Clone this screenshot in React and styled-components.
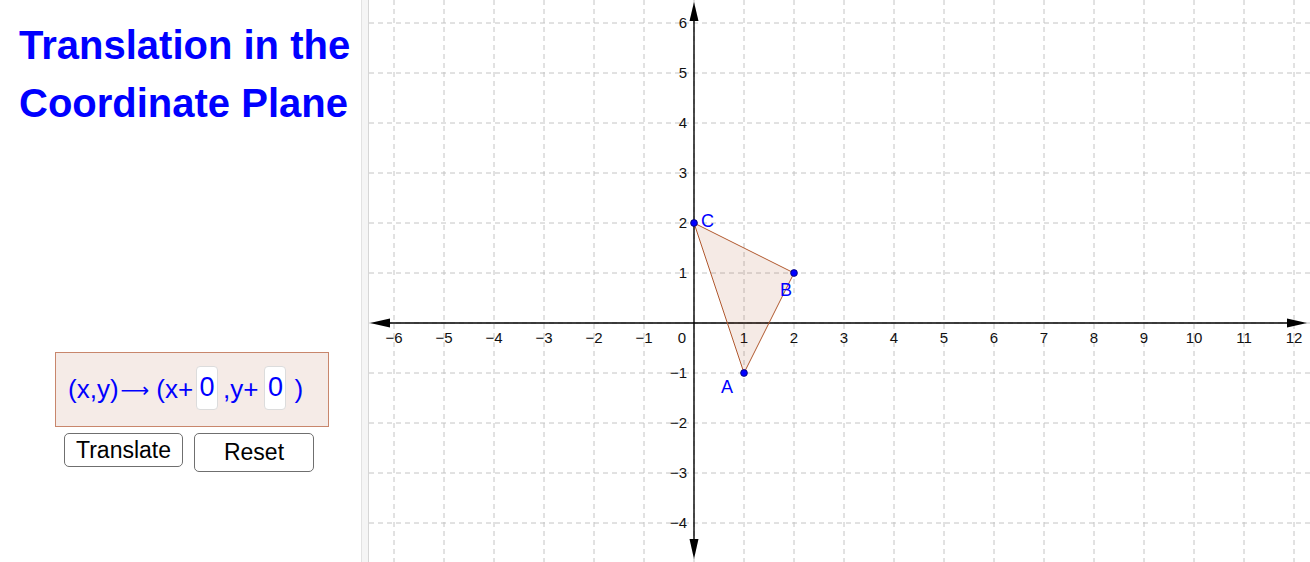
import React from "react";
import styled, { createGlobalStyle } from "styled-components";

const GlobalStyle = createGlobalStyle`
  html, body {
    margin: 0;
    padding: 0;
    background: #ffffff;
    font-family: "Liberation Sans", Arial, sans-serif;
  }
`;

const Page = styled.div`
  display: flex;
  width: 1310px;
  height: 562px;
  overflow: hidden;
  background: #ffffff;
`;

const Sidebar = styled.div`
  width: 361px;
  flex-shrink: 0;
  display: flex;
  flex-direction: column;
  padding-top: 16px;
  box-sizing: border-box;
`;

const Title = styled.h1`
  margin: 0 0 0 19px;
  font-size: 40px;
  line-height: 58px;
  font-weight: bold;
  color: #0000ff;
  white-space: nowrap;
`;

const FormulaBox = styled.div`
  margin: 220px 0 0 55px;
  width: 274px;
  height: 75px;
  box-sizing: border-box;
  display: flex;
  align-items: center;
  padding-left: 12px;
  background: #f5ebe7;
  border: 1px solid #c8866c;
  color: #0000ff;
  font-size: 26px;
  white-space: nowrap;
`;

const Arrow = styled.span`
  font-family: "DejaVu Sans", sans-serif;
  font-size: 20px;
  margin: 0 7px 0 2px;
`;

const Field = styled.input`
  width: 22px;
  height: 44px;
  box-sizing: border-box;
  margin: -4px ${(p) => p.$after}px 0 ${(p) => p.$before}px;
  padding: 0;
  border: 1px solid #dcdcdc;
  border-radius: 4px;
  background: #ffffff;
  color: #0000ff;
  font-family: inherit;
  font-size: 27px;
  text-align: center;
  outline: none;
`;

const ButtonRow = styled.div`
  display: flex;
  align-items: flex-start;
  gap: 11px;
  margin: 6px 0 0 64px;
`;

const Button = styled.button`
  width: ${(p) => p.$w}px;
  height: ${(p) => p.$h}px;
  padding: 0;
  box-sizing: border-box;
  background: #ffffff;
  border: 1px solid #6f6f6f;
  border-radius: 5px;
  font-family: "Liberation Sans", Arial, sans-serif;
  font-size: 23px;
  color: #000000;
`;

const Divider = styled.div`
  width: 8px;
  flex-shrink: 0;
  box-sizing: border-box;
  background: #f5f5f5;
  border-left: 1px solid #e2e2e2;
  border-right: 1px solid #d6d6d6;
`;

const GraphArea = styled.div`
  flex: 1;
  svg {
    display: block;
  }
`;

const OX = 694;
const OY = 323;
const U = 50;
const px = (x) => OX + x * U;
const py = (y) => OY - y * U;

const xs = Array.from({ length: 19 }, (_, i) => i - 6);
const ys = Array.from({ length: 11 }, (_, i) => i - 4);
const minus = (n) => (n < 0 ? `\u2212${-n}` : `${n}`);

const A = [1, -1];
const B = [2, 1];
const C = [0, 2];

function Graph() {
  const tri = [A, B, C].map(([x, y]) => `${px(x)},${py(y)}`).join(" ");
  return (
    <svg width="941" height="562" viewBox="369 0 941 562">
      <g stroke="#c4c4c4" strokeWidth="1" strokeDasharray="5 4">
        {xs.map((x) => (
          <line key={"v" + x} x1={px(x)} y1="0" x2={px(x)} y2="562" />
        ))}
        {ys.map((y) => (
          <line key={"h" + y} x1="369" y1={py(y)} x2="1310" y2={py(y)} />
        ))}
      </g>

      <g stroke="#000" strokeWidth="1.4">
        <line x1="385" y1={OY} x2="1292" y2={OY} />
        <line x1={OX} y1="16" x2={OX} y2="544" />
      </g>
      <g fill="#000">
        <polygon points={`370,${OY} 390,${OY - 4.5} 390,${OY + 4.5}`} />
        <polygon points={`1307,${OY} 1287,${OY - 4.5} 1287,${OY + 4.5}`} />
        <polygon points={`${OX},2 ${OX - 4.5},21 ${OX + 4.5},21`} />
        <polygon points={`${OX},559 ${OX - 4.5},539 ${OX + 4.5},539`} />
      </g>

      <g fontFamily="Liberation Sans, Arial, sans-serif" fontSize="15" fill="#111">
        {xs
          .filter((x) => x !== 0)
          .map((x) => (
            <text key={"lx" + x} x={px(x)} y={OY + 20} textAnchor="middle">
              {minus(x)}
            </text>
          ))}
        {ys
          .filter((y) => y !== 0)
          .map((y) => (
            <text key={"ly" + y} x="687" y={py(y) + 5} textAnchor="end">
              {minus(y)}
            </text>
          ))}
        <text x="682" y={OY + 20} textAnchor="middle">
          0
        </text>
      </g>

      <polygon
        points={tri}
        fill="rgb(153,51,0)"
        fillOpacity="0.1"
        stroke="#b0582e"
        strokeWidth="1"
      />

      <g fill="#0000ff" stroke="#000066" strokeWidth="0.8">
        {[A, B, C].map(([x, y], i) => (
          <circle key={i} cx={px(x)} cy={py(y)} r="3.4" />
        ))}
      </g>

      <g fontFamily="Liberation Sans, Arial, sans-serif" fontSize="18" fill="#0000ff">
        <text x="701" y="227">C</text>
        <text x="780" y="296">B</text>
        <text x="721" y="393">A</text>
      </g>
    </svg>
  );
}

export default function App() {
  return (
    <>
      <GlobalStyle />
      <Page>
        <Sidebar>
          <Title>
            Translation in the
            <br />
            Coordinate Plane
          </Title>
          <FormulaBox>
            <span>(x,y)</span>
            <Arrow>⟶</Arrow>
            <span>(x+</span>
            <Field readOnly value="0" $before={3} $after={5} />
            <span>,y+</span>
            <Field readOnly value="0" $before={6} $after={8} />
            <span>)</span>
          </FormulaBox>
          <ButtonRow>
            <Button $w={119} $h={34}>Translate</Button>
            <Button $w={120} $h={39}>Reset</Button>
          </ButtonRow>
        </Sidebar>
        <Divider />
        <GraphArea>
          <Graph />
        </GraphArea>
      </Page>
    </>
  );
}
